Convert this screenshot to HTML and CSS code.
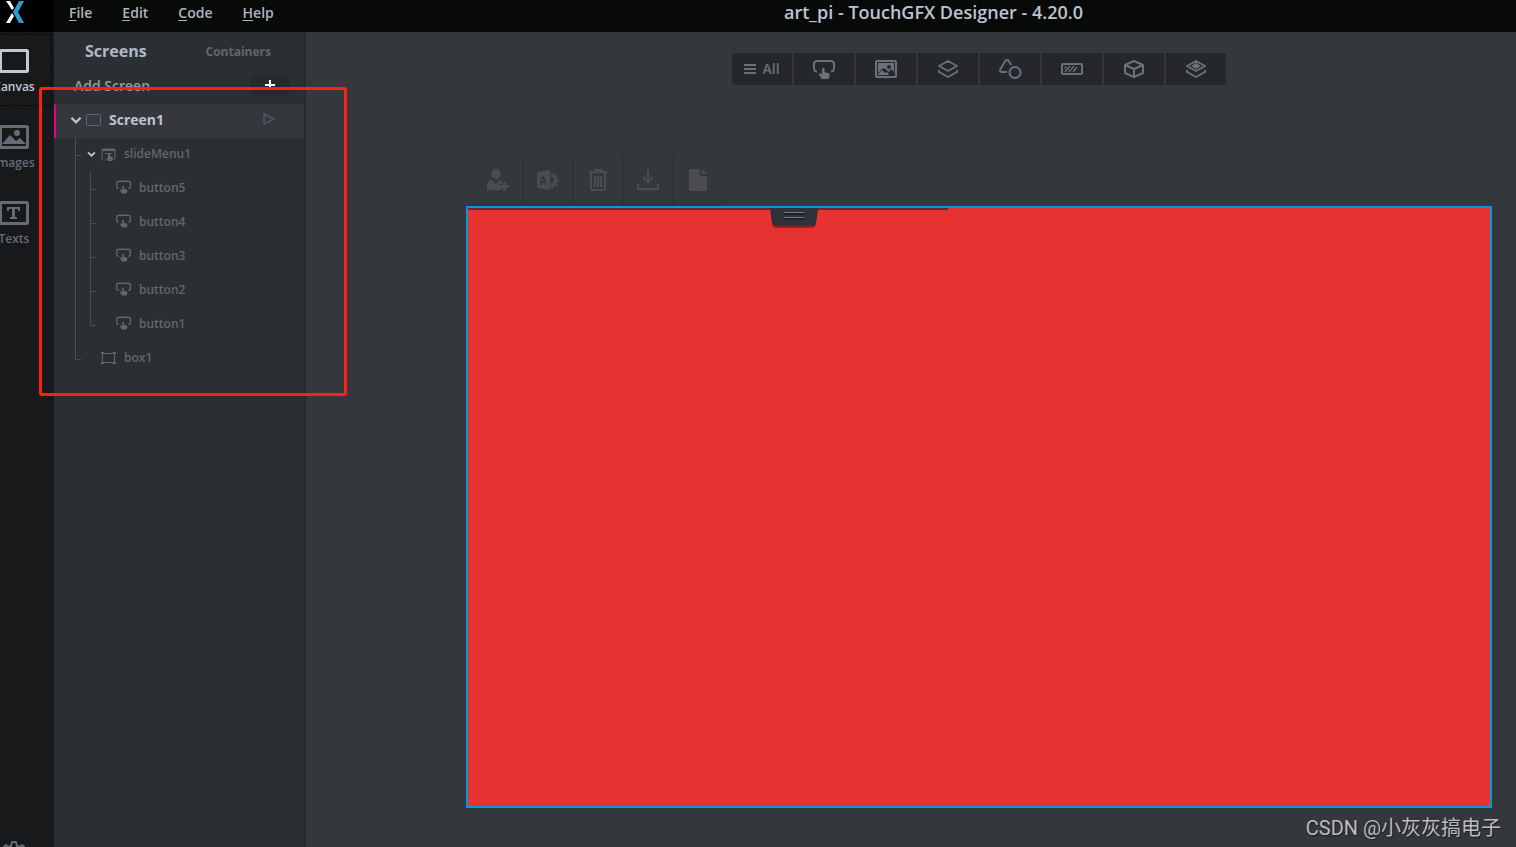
FILE: index.html
```
<!DOCTYPE html>
<html lang="en">
<head>
    <meta charset="UTF-8">
    <meta name="viewport" content="width=device-width, initial-scale=1.0">
    <title>art_pi - TouchGFX Designer - 4.20.0</title>
    <link rel="stylesheet" href="styles.css">
</head>
<body>
    <!-- icons used more than once -->
    <svg class="defs" width="0" height="0" aria-hidden="true">
        <symbol id="touch" viewBox="0 0 22 19">
            <path d="M4 11.5C2 11.5 1 10 1 8.500V4C1 2 2.500 1 4.500 1h13C19.500 1 21 2 21 4v4.500c0 2-1 3-3 3" fill="none" stroke="currentColor" stroke-width="2"/>
            <path d="M9 8h2.500v4l5 1.500V17l-1 2H9l-3-4v-2l3 1z" fill="currentColor"/>
        </symbol>
        <symbol id="picture" viewBox="0 0 30 24">
            <rect x="1.500" y="1.500" width="27" height="21" rx="1" fill="none" stroke="currentColor" stroke-width="3"/>
            <circle cx="18" cy="8" r="3" fill="currentColor"/>
            <path d="M3 19l8-9 6 6 4-3 6 6z" fill="currentColor"/>
        </symbol>
        <symbol id="chevron" viewBox="0 0 10 7">
            <path d="M1 1.500l4 4 4-4" fill="none" stroke="currentColor" stroke-width="2"/>
        </symbol>
    </svg>

    <header>
        <div class="logo">
            <svg width="18" height="22" viewBox="0 0 18 22">
                <path d="M0 0h4l4 7-2 2zM0 22h4l4-7-2-3z" fill="#fff"/>
                <path d="M18 0h-5L7 11l6 11h5l-6-11z" fill="#3399cc"/>
            </svg>
        </div>
        <nav>
            <a href="#"><u>F</u>ile</a>
            <a href="#"><u>E</u>dit</a>
            <a href="#"><u>C</u>ode</a>
            <a href="#"><u>H</u>elp</a>
        </nav>
        <h1>art_pi - TouchGFX Designer - 4.20.0</h1>
    </header>

    <main>
        <aside class="rail">
            <div class="rail-list">
                <button class="rail-item active">
                    <svg width="30" height="24" viewBox="0 0 30 24"><rect x="1.500" y="1.500" width="27" height="21" rx="1" fill="none" stroke="currentColor" stroke-width="3"/></svg>
                    Canvas
                </button>
                <button class="rail-item">
                    <svg width="30" height="24"><use href="#picture"/></svg>
                    Images
                </button>
                <button class="rail-item">
                    <svg width="30" height="24" viewBox="0 0 30 24">
                        <rect x="1.500" y="1.500" width="27" height="21" rx="1" fill="none" stroke="currentColor" stroke-width="3"/>
                        <path d="M8 6h13v4h-2V8h-3v8h2v2h-7v-2h2V8h-3v2H8z" fill="currentColor"/>
                    </svg>
                    Texts
                </button>
                <button class="rail-item settings" aria-label="Settings">
                    <svg width="24" height="24" viewBox="0 0 24 24" fill="none" stroke="currentColor" stroke-width="2">
                        <path d="M10 1h4l1 4 2 1 3-2 3 3-2 3 1 2v4l-4 1-1 3-3 3h-4l-3-3-1-3-4-1v-4l1-2-2-3 3-3 3 2 2-1z" stroke-linejoin="round"/>
                        <circle cx="12" cy="13" r="4"/>
                    </svg>
                </button>
            </div>
        </aside>

        <section class="panel">
            <div class="tabs">
                <button class="tab selected">Screens</button>
                <button class="tab">Containers</button>
            </div>
            <div class="add">
                <span>Add Screen</span>
                <button aria-label="Add Screen">
                    <svg width="10" height="10" viewBox="0 0 10 10"><path d="M5 0v10M0 5h10" stroke="#fff" stroke-width="2"/></svg>
                </button>
            </div>
            <div class="screen">
                <svg width="12" height="8"><use href="#chevron"/></svg>
                <svg class="dim" width="15" height="12" viewBox="0 0 15 12"><rect x=".5" y=".5" width="14" height="11" rx="1" fill="none" stroke="currentColor"/></svg>
                <span>Screen1</span>
                <button aria-label="Run Screen1">
                    <svg width="12" height="12" viewBox="0 0 12 12"><path d="M1 1l10 5-10 5z" fill="none" stroke="currentColor" stroke-width="1.500" stroke-linejoin="round"/></svg>
                </button>
            </div>
            <ul class="tree">
                <li>
                    <i class="branch"></i>
                    <div>
                        <div class="row parent">
                            <svg class="open" width="9" height="6"><use href="#chevron"/></svg>
                            <svg width="15" height="13" viewBox="0 0 15 13">
                                <path d="M4 12H2.500C1.500 12 1 11.500 1 10.500v-8C1 1.500 1.500 1 2.500 1h10c1 0 1.500.5 1.500 1.500v8c0 1-.5 1.500-1.500 1.500" fill="none" stroke="currentColor"/>
                                <path d="M1 1h13v2H1zM7 5h2v3l3 1v2l-1 2H7l-2-3 2 0z" fill="currentColor"/>
                                <path d="M4 5.500h7" stroke="currentColor"/>
                            </svg>
                            <span>slideMenu1</span>
                        </div>
                        <ul class="subtree">
                            <li><i class="branch"></i><div class="row"><svg width="15" height="14"><use href="#touch"/></svg><span>button5</span></div></li>
                            <li><i class="branch"></i><div class="row"><svg width="15" height="14"><use href="#touch"/></svg><span>button4</span></div></li>
                            <li><i class="branch"></i><div class="row"><svg width="15" height="14"><use href="#touch"/></svg><span>button3</span></div></li>
                            <li><i class="branch"></i><div class="row"><svg width="15" height="14"><use href="#touch"/></svg><span>button2</span></div></li>
                            <li><i class="branch"></i><div class="row"><svg width="15" height="14"><use href="#touch"/></svg><span>button1</span></div></li>
                        </ul>
                    </div>
                </li>
                <li>
                    <i class="branch"></i>
                    <div class="row">
                        <svg width="15" height="12" viewBox="0 0 15 12">
                            <path d="M1.500 1.500h12v9h-12z" fill="none" stroke="currentColor"/>
                            <path d="M0 0h3v2H0zM12 0h3v2h-3zM0 10h3v2H0zM12 10h3v2h-3z" fill="currentColor"/>
                        </svg>
                        <span>box1</span>
                    </div>
                </li>
            </ul>
        </section>

        <section class="workspace">
            <div class="widgets">
                <button>
                    <svg width="12" height="10" viewBox="0 0 12 10"><path d="M0 1h12M0 5h12M0 9h12" stroke="currentColor" stroke-width="2"/></svg>
                    <span>All</span>
                </button>
                <button aria-label="Buttons"><svg width="22" height="19"><use href="#touch"/></svg></button>
                <button aria-label="Images">
                    <svg width="22" height="18" viewBox="0 0 22 18">
                        <rect x="1" y="1" width="20" height="16" rx="1" fill="none" stroke="currentColor" stroke-width="2"/>
                        <path fill-rule="evenodd" d="M3 3h16v9l-3-3-2 3-5-4-2 1-4 4zM14 5a2 2 0 1 0 .1 0z" fill="currentColor"/>
                        <path d="M3 14l4-4 3 3 2-1 2 2-1 1H3z" fill="currentColor"/>
                    </svg>
                </button>
                <button aria-label="Containers">
                    <svg width="20" height="18" viewBox="0 0 20 18" fill="none" stroke="currentColor" stroke-width="2" stroke-linejoin="round"><path d="M10 1l9 5-9 5-9-5zM1 10v2l9 5 9-5v-2"/></svg>
                </button>
                <button aria-label="Shapes">
                    <svg width="23" height="20" viewBox="0 0 23 20" fill="none" stroke="currentColor" stroke-width="2"><path d="M8 13H3c-2 0-2.500-1-1.500-3L6 2.500C7 .5 9 .5 10 2.500L12.500 6"/><circle cx="16" cy="13.500" r="5.500"/></svg>
                </button>
                <button aria-label="Progress Indicators">
                    <svg width="22" height="12" viewBox="0 0 22 12" fill="none" stroke="currentColor"><rect x="1" y="1" width="20" height="10" rx="1" stroke-width="2"/><path d="M3.500 5.500l2-2M4 9l5-6M8 9l5-6M12 9l4-5" stroke-width="1.500"/></svg>
                </button>
                <button aria-label="Miscellaneous">
                    <svg width="20" height="18" viewBox="0 0 20 18" fill="none" stroke="currentColor" stroke-width="2" stroke-linejoin="round"><path d="M10 1l9 4v8l-9 4-9-4V5zM1 5l9 4 9-4M10 9v8"/></svg>
                </button>
                <button aria-label="Custom Containers">
                    <svg width="20" height="18" viewBox="0 0 20 18" fill="none" stroke="currentColor" stroke-width="2" stroke-linejoin="round"><path d="M10 1l9 5-9 5-9-5zM1 10v2l9 5 9-5v-2"/><path d="M10 3l5 3-5 3-5-3z" fill="currentColor" stroke="none"/></svg>
                </button>
            </div>

            <div class="actions">
                <button aria-label="Add Container">
                    <svg width="22" height="22" viewBox="0 0 22 22" fill="currentColor"><circle cx="9" cy="5" r="5"/><path d="M0 21v-5c0-3 2-5 5-5l4 4 4-4 2 1v3h-3v4h2v2zM16 13h3v3h3v3h-3v3h-3v-3h-4v-3h4z"/></svg>
                </button>
                <button aria-label="Text Settings">
                    <svg width="22" height="22" viewBox="0 0 22 22" fill="currentColor">
                        <path fill-rule="evenodd" d="M0 3l13-2v20L0 19zM5 7l-3 9h2l.5-2h3l.5 2h2L7 7zM6 9.500L7 12H5z"/>
                        <path d="M14 6.500a4.500 4.500 0 0 1 0 9" fill="none" stroke="currentColor" stroke-width="3"/>
                        <path d="M14 4h3v3h-3zM18 6l2-1 1 2-2 2zM19 10h3v3h-3zM18 14l3 2-1 2-3-2zM14 15h3v4h-3z"/>
                    </svg>
                </button>
                <button aria-label="Delete">
                    <svg width="18" height="22" viewBox="0 0 18 22" fill="none" stroke="currentColor" stroke-width="2"><path d="M0 3h18M6 3V1h6v2M2 4v16q0 1 1 1h12q1 0 1-1V4M6 7v11M9 7v11M12 7v11"/></svg>
                </button>
                <button aria-label="Import">
                    <svg width="22" height="20" viewBox="0 0 22 20" fill="none" stroke="currentColor" stroke-width="2"><path d="M1 14v5h20v-5M11 0v12M6 7l5 5 5-5"/></svg>
                </button>
                <button aria-label="Notes">
                    <svg width="18" height="22" viewBox="0 0 18 22" fill="currentColor"><path d="M0 0h11v7h7v15H0zM13 0l5 5h-5z"/></svg>
                </button>
            </div>

            <div class="canvas">
                <div class="slide-menu">
                    <svg width="52" height="24" viewBox="0 0 52 24">
                        <path d="M2 0h48l-2 16q-.5 4-4 4H8q-3.500 0-4-4z" fill="#8f2529"/>
                        <path d="M2 0h48l-2 14q-.5 4-4 4H8q-3.500 0-4-4z" fill="#2e3239"/>
                        <path d="M16 4.500h20M16 9.500h20" stroke="#717987"/>
                        <path d="M16 6h20M16 11h20" stroke="#1d2027" stroke-width="2"/>
                    </svg>
                </div>
            </div>
            <footer>CSDN @小灰灰搞电子</footer>
        </section>
    </main>

    <div class="highlight"></div>
</body>
</html>
```
FILE: styles.css
```
* {
    box-sizing: border-box;
}

body {
    margin: 0;
    height: 100vh;
    display: flex;
    flex-direction: column;
    overflow: hidden;
    background-color: #34373c;
    color: #bcc5d0;
    font-family: "Open Sans", "Noto Sans", sans-serif;
}

button {
    display: flex;
    align-items: center;
    justify-content: center;
    padding: 0;
    border: none;
    background: none;
    color: inherit;
    font: inherit;
    cursor: pointer;
}

svg {
    display: block;
    flex-shrink: 0;
}

.defs {
    position: absolute;
}

ul {
    list-style-type: none;
    margin: 0;
    padding: 0;
}

/* title bar */
header {
    display: flex;
    height: 32px;
    background-color: #080a09;
}

.logo {
    width: 54px;
    padding: 1px 0 0 6px;
    background-color: #000;
}

nav {
    display: flex;
    gap: 30px;
    width: 297px;
    padding-left: 15px;
    line-height: 26px;
}

nav a {
    color: #aeb5bf;
    font-size: 14px;
    font-weight: 600;
    text-decoration: none;
}

nav u {
    text-underline-offset: 2px;
}

h1 {
    flex: 1;
    margin: 0;
    font-size: 18px;
    font-weight: 600;
    line-height: 24px;
    text-align: center;
}

main {
    flex: 1;
    display: flex;
    min-height: 0;
}

/* left rail */
.rail {
    width: 54px;
    overflow: hidden;
    background-color: #18191b;
}

.rail-list {
    display: flex;
    flex-direction: column;
    gap: 4px;
    width: 76px;
    height: 100%;
    margin-left: -24px;
    padding-top: 2px;
}

.rail-item {
    flex-direction: column;
    gap: 5px;
    height: 72px;
    padding-top: 5px;
    flex-shrink: 0;
    color: #666c76;
    font-size: 12px;
    font-weight: 600;
    line-height: 18px;
}

.rail-item.active {
    border: 1px dashed #070808;
    color: #c0c9d4;
}

.rail-item.settings {
    height: 6px;
    margin-top: auto;
    padding: 0;
    justify-content: flex-start;
}

/* screens panel */
.panel {
    width: 252px;
    border-right: 2px solid #28292d;
    background-color: #2b2f32;
}

.tabs {
    display: flex;
    align-items: center;
    justify-content: space-between;
    height: 38px;
    padding: 0 33px 0 31px;
}

.tab {
    color: #61666e;
    font-size: 12px;
    font-weight: bold;
}

.tab.selected {
    color: #b0b9c4;
    font-size: 16px;
}

.add {
    display: flex;
    align-items: center;
    justify-content: space-between;
    height: 34px;
    padding: 0 14px 4px 20px;
    color: #959ca6;
    font-size: 14px;
    font-weight: 600;
}

.add button {
    width: 40px;
    height: 20px;
    border-radius: 4px;
    background-color: #27292d;
}

.screen {
    display: flex;
    align-items: center;
    height: 34px;
    padding: 0 29px 2px 14px;
    border-left: 2px solid #e6007e;
    background-color: #34373c;
    font-size: 14px;
    font-weight: bold;
}

.screen .dim {
    margin: 0 8px 0 4px;
    color: #61666e;
}

.screen span,
.screen button,
.row span,
.subtree svg {
    margin-bottom: 2px;
}

.screen button {
    margin-left: auto;
    color: #50555c;
}

.tree {
    margin-left: 21px;
    color: #61666e;
    font-size: 12px;
    font-weight: 600;
}

.tree li {
    display: flex;
}

.branch {
    width: 6px;
    border-left: 1px solid #4a4f55;
}

.branch::before {
    content: "";
    display: block;
    height: 17px;
    border-bottom: 1px solid #4a4f55;
}

.tree li:last-child > .branch {
    align-self: flex-start;
}

.row {
    display: flex;
    align-items: center;
    gap: 8px;
    height: 34px;
    padding: 0 0 2px 20px;
}

.row.parent {
    padding-left: 6px;
}

.row .open {
    margin-right: -3px;
    color: #bcc5d0;
}

.subtree {
    margin-left: 9px;
}

/* workspace */
.workspace {
    flex: 1;
    display: flex;
    flex-direction: column;
    padding: 21px 24px 0 160px;
}

.widgets {
    display: flex;
    gap: 2px;
    align-self: center;
    border-radius: 4px;
    overflow: hidden;
    color: #69717a;
    font-size: 14px;
    font-weight: 600;
}

.widgets button {
    gap: 6px;
    width: 60px;
    height: 32px;
    background-color: #25272b;
}

.widgets span {
    padding-bottom: 2px;
}

.actions {
    display: flex;
    padding: 70px 0 1px 7px;
    color: #4a4c50;
}

.actions button {
    width: 50px;
    height: 50px;
    border: 1px solid #2f3136;
}

.canvas {
    flex: 1;
    border: 2px solid #009ade;
    background-color: #e63332;
}

.slide-menu {
    width: 480px;
    height: 2px;
    padding-left: 300px;
    background-color: #642b31;
}

footer {
    height: 39px;
    margin-right: -9px;
    color: #bcbdbf;
    font-family: Roboto, "Noto Sans CJK SC", sans-serif;
    font-size: 20px;
    line-height: 40px;
    text-align: right;
    text-shadow: 1px 1px 1px #1c1d20;
}

/* marks the widget tree */
.highlight {
    position: absolute;
    left: 39px;
    top: 87px;
    width: 308px;
    height: 309px;
    border: 3px solid #ff2015;
    border-radius: 3px;
    pointer-events: none;
}
```
